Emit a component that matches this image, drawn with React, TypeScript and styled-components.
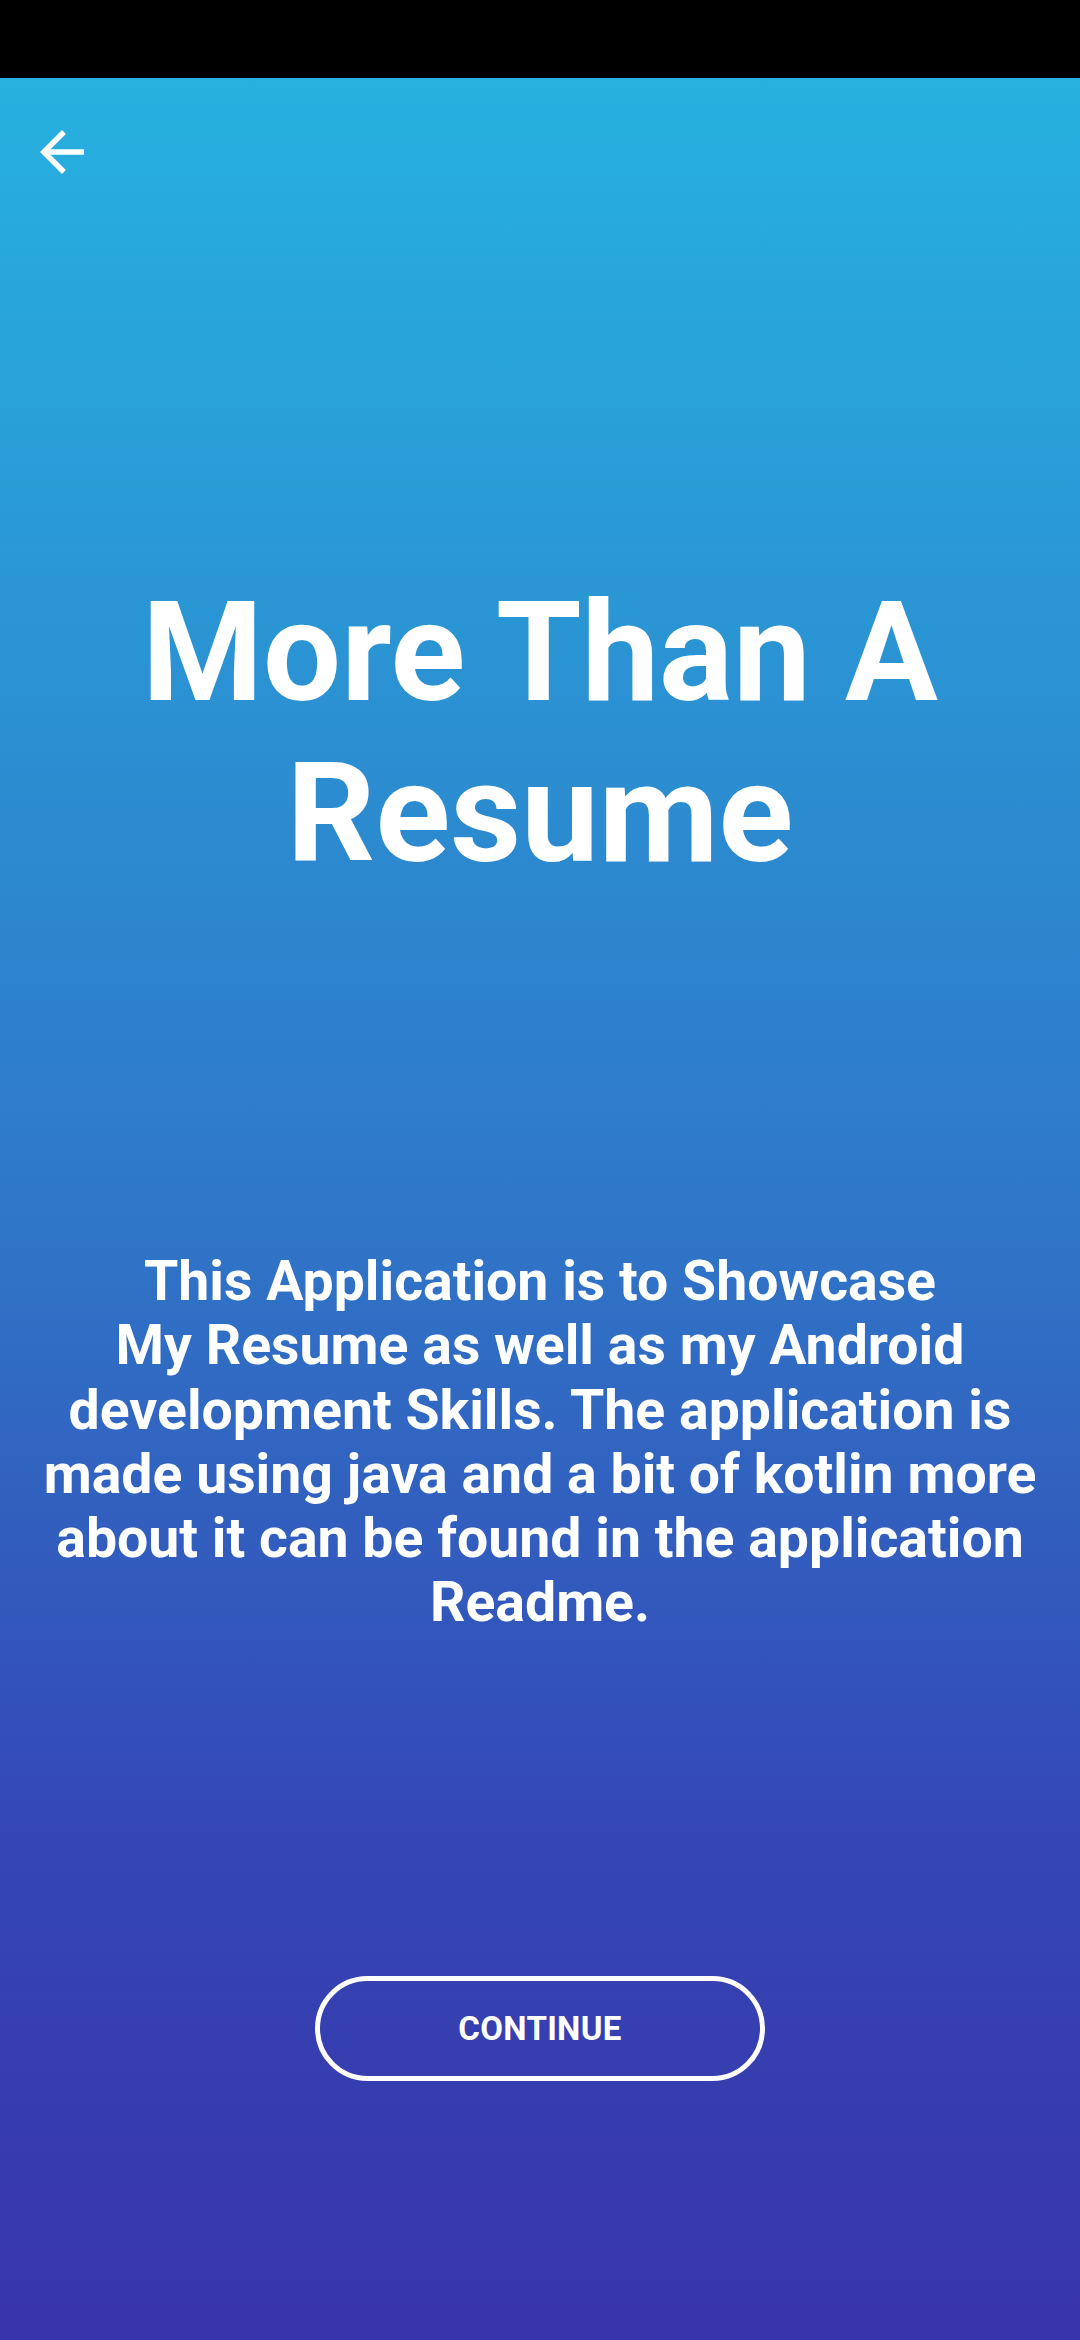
import React from 'react';
import styled, { createGlobalStyle } from 'styled-components';

const GlobalStyle = createGlobalStyle`
    html, body {
        margin: 0;
        padding: 0;
        background: #000;
    }
    body {
        font-family: Roboto, "Noto Sans", sans-serif;
        -webkit-font-smoothing: antialiased;
    }
`;

const StatusBar = styled.div`
    height: 78px;
    background-color: #000;
`;

const Screen = styled.main`
    min-height: 2262px;
    display: flex;
    flex-direction: column;
    align-items: center;
    background: linear-gradient(180deg, #26b1df 0%, #2f77c8 50%, #3446b5 78%, #3834a9 100%);
    color: #fff;
`;

const TopBar = styled.header`
    align-self: stretch;
    padding: 41px 0 0 29px;
`;

const BackButton = styled.button`
    width: 66px;
    height: 66px;
    padding: 0;
    border: none;
    background: transparent;
    color: #fff;
    display: block;
`;

const Title = styled.h1`
    margin: 388px 0 0;
    font-size: 138.3px;
    line-height: 161px;
    font-weight: 700;
    text-align: center;
`;

const Description = styled.p`
    margin: 355px 0 0;
    padding: 0 38px;
    font-size: 55.4px;
    line-height: 64.3px;
    font-weight: 700;
    text-align: center;
`;

const ContinueButton = styled.button`
    margin-top: 340px;
    width: 450px;
    height: 105px;
    border: 5.5px solid #fff;
    border-radius: 53px;
    background: transparent;
    color: #fff;
    font-family: Roboto, sans-serif;
    font-size: 33px;
    font-weight: 700;
    letter-spacing: 0.3px;
    text-transform: uppercase;
`;

const ArrowBack = () => (
    <svg width="66" height="66" viewBox="0 0 24 24" fill="currentColor">
        <path d="M20 11H7.83l5.59-5.59L12 4l-8 8 8 8 1.41-1.41L7.83 13H20v-2z" />
    </svg>
);

const App = () => {
    return (
        <>
            <GlobalStyle />
            <StatusBar />
            <Screen>
                <TopBar>
                    <BackButton aria-label="Back">
                        <ArrowBack />
                    </BackButton>
                </TopBar>
                <Title>
                    More Than A
                    <br />
                    Resume
                </Title>
                <Description>
                    This Application is to Showcase
                    <br />
                    My Resume as well as my Android development Skills. The application is made
                    using java and a bit of kotlin more about it can be found in the application
                    Readme.
                </Description>
                <ContinueButton>Continue</ContinueButton>
            </Screen>
        </>
    );
};

export default App;
